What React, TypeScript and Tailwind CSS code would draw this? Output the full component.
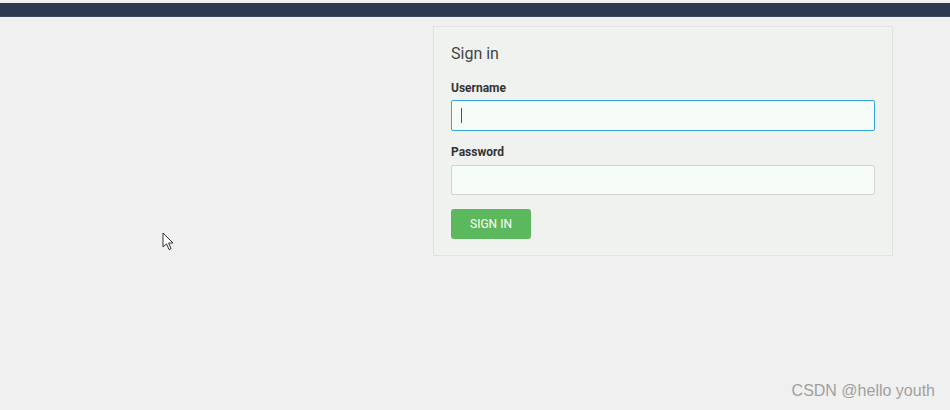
import React from 'react';

function Cursor() {
  return (
    <svg width="14" height="20" viewBox="0 0 14 20" className="absolute left-[162px] top-[232px]">
      <path d="M1 1 L1 15 L4.5 11.8 L7 17.5 L9 16.6 L6.6 11 L11 11 Z" fill="#fff" stroke="#333" strokeWidth="1" strokeLinejoin="round" />
    </svg>
  );
}

export default function App() {
  return (
    <div className="relative w-[950px] h-[410px] overflow-hidden bg-[#f0f0f0] font-['Roboto',sans-serif]">
      <div className="h-[3px] bg-[#f0f0f0]" />
      <div className="h-[14px] bg-[#2e3a4f] border-b border-[#3c4a60]" />
      <div className="pl-[433px] pt-[9px]">
        <div className="w-[460px] border border-[#e1e3e1] bg-[#eff2ef] px-[17px] pt-[17px] pb-[16px]">
          <h2 className="text-[16px] leading-[20px] text-[#444]">Sign in</h2>
          <form className="flex flex-col" onSubmit={(e) => e.preventDefault()}>
            <label className="mt-[16px] text-[12px] leading-[16px] font-bold text-[#333]">Username</label>
            <div className="mt-[4px] h-[31px] rounded-[2px] border border-[#33a7d8] bg-[#f5fbf7] flex items-center px-[9px]">
              <span className="w-[1px] h-[15px] bg-[#555]" />
            </div>
            <label className="mt-[13px] text-[12px] leading-[16px] font-bold text-[#333]">Password</label>
            <input
              type="password"
              className="mt-[5px] h-[30px] rounded-[2px] border border-[#d2d4d2] bg-[#f5fbf7] outline-none"
            />
            <button
              type="submit"
              className="mt-[14px] w-[80px] h-[30px] rounded-[3px] bg-[#5cb85c] text-white text-[12px] leading-[16px]"
            >
              SIGN IN
            </button>
          </form>
        </div>
      </div>
      <Cursor />
      <div className="absolute right-[15px] top-[381px] text-[16px] leading-[20px] text-[#a0a0a0] font-['Liberation_Sans',sans-serif]">
        CSDN @hello youth
      </div>
    </div>
  );
}
